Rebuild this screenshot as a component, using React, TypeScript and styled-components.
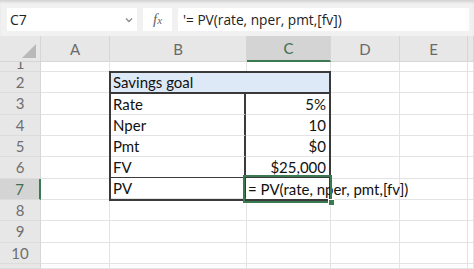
import React from 'react'
import styled, { createGlobalStyle, css } from 'styled-components'

const GlobalStyle = createGlobalStyle`
  html, body {
    margin: 0;
    padding: 0;
    background: #ffffff;
  }
  body {
    width: 474px;
    height: 269px;
    overflow: hidden;
    font-family: Lato, "Liberation Sans", sans-serif;
  }
`

const GREEN = '#3b7a50'
const GRID = '#e3e3e3'
const DARK = '#3a3a3a'

const Window = styled.div`
  width: 474px;
  height: 269px;
  display: flex;
  flex-direction: column;
  overflow: hidden;
`

const Toolbar = styled.div`
  height: 36px;
  flex-shrink: 0;
  box-sizing: border-box;
  display: flex;
  align-items: flex-start;
  gap: 6px;
  padding: 8px 5px 0 7px;
  background: #f1f1f1;
  box-shadow: inset 0 3px 3px -1px #d2d2d2;
`

const NameBox = styled.div`
  width: 130px;
  height: 23px;
  background: #fff;
  display: flex;
  align-items: center;
  justify-content: space-between;
  padding: 0 4px 0 3px;
  box-sizing: border-box;
  font-family: "Open Sans", sans-serif;
  font-size: 14px;
  color: #222;
`

const FxBox = styled.div`
  width: 29px;
  height: 23px;
  background: #fff;
  display: flex;
  align-items: center;
  justify-content: center;
  font-family: "Liberation Serif", serif;
  font-style: italic;
  font-size: 15px;
  color: #666;
`

const FormulaBox = styled.div`
  flex: 1;
  height: 23px;
  background: #fff;
  display: flex;
  align-items: center;
  padding-left: 5px;
  font-family: "Open Sans", sans-serif;
  font-size: 13.7px;
  color: #222;
  white-space: nowrap;
`

const Sheet = styled.div`
  flex: 1;
  display: grid;
  grid-template-columns: 41px 69px 137px 84px 69px 68px 1fr;
  grid-template-rows: 26px 10px repeat(9, 21.33px) 1fr;
  position: relative;
`

const Corner = styled.div`
  background: #e7e7e7;
  border-right: 1px solid #d6d6d6;
  border-bottom: 1px solid #d6d6d6;
  box-sizing: border-box;
  position: relative;
  &::after {
    content: '';
    position: absolute;
    right: 4px;
    bottom: 3px;
    width: 0;
    height: 0;
    border-left: 14px solid transparent;
    border-bottom: 14px solid #b9b9b9;
  }
`

const ColHead = styled.div<{ $active?: boolean }>`
  background: ${({ $active }) => ($active ? '#d4d4d4' : '#e7e7e7')};
  border-right: 1px solid #d6d6d6;
  border-bottom: ${({ $active }) => ($active ? `2px solid ${GREEN}` : '1px solid #d6d6d6')};
  box-sizing: border-box;
  display: flex;
  align-items: center;
  justify-content: center;
  font-size: 15px;
  color: ${({ $active }) => ($active ? '#3f6e50' : '#6a6a6a')};
`

const RowHead = styled.div<{ $active?: boolean; $clip?: boolean }>`
  background: ${({ $active }) => ($active ? '#d4d4d4' : '#e7e7e7')};
  border-right: ${({ $active }) => ($active ? `2px solid ${GREEN}` : '1px solid #d6d6d6')};
  border-bottom: 1px solid #dcdcdc;
  box-sizing: border-box;
  display: flex;
  align-items: ${({ $clip }) => ($clip ? 'flex-end' : 'center')};
  justify-content: center;
  overflow: hidden;
  font-size: 15px;
  line-height: 18px;
  color: ${({ $active }) => ($active ? '#3f6e50' : '#6f6f6f')};
  ${({ $clip }) =>
    $clip &&
    css`
      & > span {
        margin-bottom: -1px;
      }
    `}
`

const Cell = styled.div`
  border-right: 1px solid ${GRID};
  border-bottom: 1px solid ${GRID};
  box-sizing: border-box;
`

const Table = styled.div`
  grid-column: 3 / 5;
  grid-row: 3 / 9;
  min-width: 0;
  border: 2px solid ${DARK};
  margin: -1px 0 -1px -1px;
  display: grid;
  grid-template-columns: 135px minmax(0, 1fr);
  grid-template-rows: repeat(6, 1fr);
  background: #fff;
  position: relative;
  z-index: 1;
`

const TitleCell = styled.div`
  grid-column: 1 / 3;
  background: #dde9f6;
  border-bottom: 2px solid ${DARK};
  display: flex;
  align-items: center;
  padding-left: 2px;
  font-size: 15px;
  color: #111;
`

const TableCell = styled.div<{ $right?: boolean; $label?: boolean; $topLine?: boolean }>`
  display: flex;
  align-items: center;
  justify-content: ${({ $right }) => ($right ? 'flex-end' : 'flex-start')};
  padding: ${({ $right }) => ($right ? '0 3px 0 0' : '0 0 0 2px')};
  border-right: ${({ $label }) => ($label ? `2px solid ${DARK}` : 'none')};
  border-bottom: 1px solid ${GRID};
  border-top: ${({ $topLine }) => ($topLine ? `1px solid ${DARK}` : 'none')};
  margin-top: ${({ $topLine }) => ($topLine ? '-1px' : '0')};
  min-width: 0;
  font-size: 15px;
  color: #111;
  white-space: nowrap;
  position: relative;
  &:last-child {
    border-bottom: none;
  }
`

const ActiveCell = styled(TableCell)`
  outline: 2px solid ${GREEN};
  outline-offset: 0px;
  overflow: visible;
  z-index: 2;
  margin-left: -1px;
  margin-right: -1px;
  margin-bottom: -2px;
  & > span {
    position: relative;
    z-index: -1;
    padding-left: 1px;
  }
`

const FillHandle = styled.div`
  position: absolute;
  right: -5px;
  bottom: -5px;
  width: 5px;
  height: 5px;
  background: ${GREEN};
  border: 1px solid #fff;
`

const Chevron = () => (
  <svg width="8" height="6" viewBox="0 0 8 6">
    <path d="M1 1.5 L4 4.5 L7 1.5" fill="none" stroke="#8a8a8a" strokeWidth="1.3" />
  </svg>
)

const columns = ['A', 'B', 'C', 'D', 'E', '']
const rows = [1, 2, 3, 4, 5, 6, 7, 8, 9, 10, 0]

const inTable = (r: number, c: string) => r >= 2 && r <= 7 && (c === 'B' || c === 'C')

const tableRows = [
  { label: 'Rate', value: '5%' },
  { label: 'Nper', value: '10' },
  { label: 'Pmt', value: '$0' },
  { label: 'FV', value: '$25,000' },
]

export default function App() {
  return (
    <Window>
      <GlobalStyle />
      <Toolbar>
        <NameBox>
          <span>C7</span>
          <Chevron />
        </NameBox>
        <FxBox>
          f<span style={{ fontSize: 11 }}>x</span>
        </FxBox>
        <FormulaBox>'= PV(rate, nper, pmt,[fv])</FormulaBox>
      </Toolbar>
      <Sheet>
        <Corner />
        {columns.map((c, i) => (
          <ColHead key={i} $active={c === 'C'}>
            {c}
          </ColHead>
        ))}
        {rows.map((r) => (
          <React.Fragment key={r}>
            <RowHead $active={r === 7} $clip={r === 1}>
              <span>{r || ''}</span>
            </RowHead>
            {columns.map((c, i) => (inTable(r, c) ? null : <Cell key={i} />))}
          </React.Fragment>
        ))}
        <Table>
          <TitleCell>Savings goal</TitleCell>
          {tableRows.map((row) => (
            <React.Fragment key={row.label}>
              <TableCell $label>{row.label}</TableCell>
              <TableCell $right>{row.value}</TableCell>
            </React.Fragment>
          ))}
          <TableCell $label $topLine>
            PV
          </TableCell>
          <ActiveCell $topLine>
            <span>= PV(rate, nper, pmt,[fv])</span>
            <FillHandle />
          </ActiveCell>
        </Table>
      </Sheet>
    </Window>
  )
}
